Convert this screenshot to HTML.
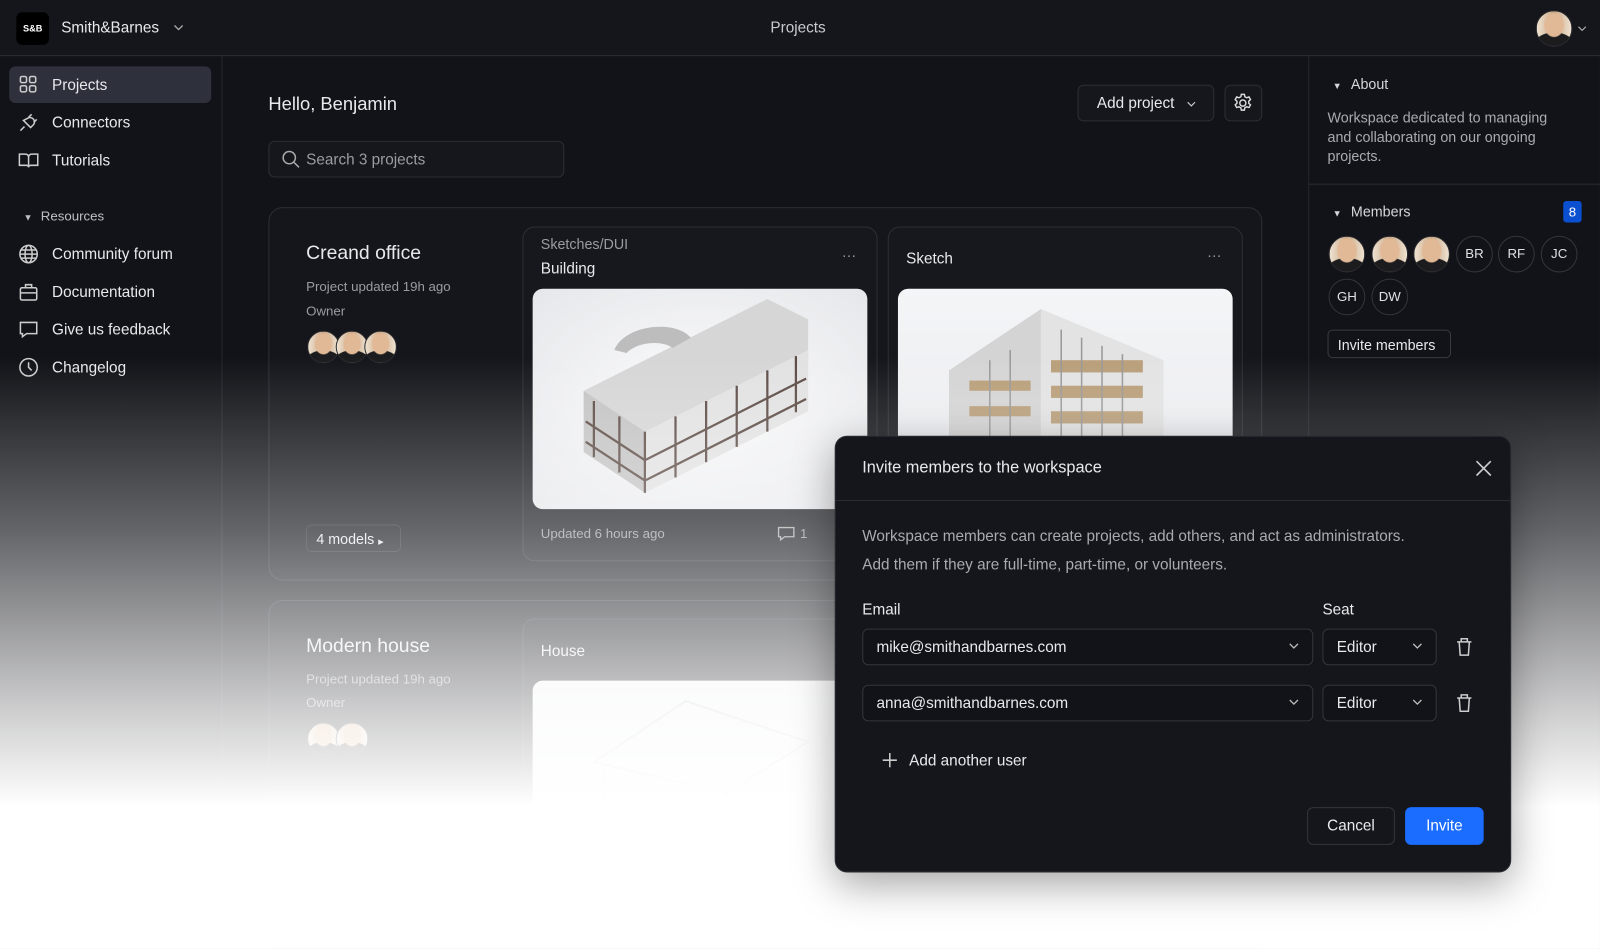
<!DOCTYPE html>
<html><head><meta charset="utf-8"><style>
*{box-sizing:border-box;margin:0;padding:0}
body{width:1600px;height:941px;overflow:hidden;background:#fff;font-family:"Liberation Sans",sans-serif;}
#s{position:absolute;left:0;top:0;width:1568px;height:930px;transform:scale(1.0204);transform-origin:0 0;overflow:hidden;background:#121318}
.a{position:absolute}
.t{color:#e8e9ec}
.m{color:#9a9ca3}
.bd{border:1px solid #2c2e36}
svg{display:block}
.av{position:absolute;width:32px;height:32px;border-radius:50%;background:radial-gradient(ellipse 30% 36% at 50% 40%,#e2b996 0 90%,transparent 100%),radial-gradient(ellipse 60% 40% at 50% 100%,#1c1c1e 0 95%,transparent 100%),linear-gradient(90deg,#efe3d2,#c9a886 50%,#efe3d2);border:1px solid #2a2a2e}
.ini{position:absolute;width:36px;height:36px;border-radius:50%;border:1px solid #33353d;color:#e0e1e5;font-size:13px;text-align:center;line-height:34px}
.nav{position:absolute;left:18px;font-size:15px;color:#e8e9ec}
.chev{position:absolute;right:13px;top:13px}
</style></head><body><div id="s">
<div class="a" style="left:0;top:0;width:1568px;height:55px;background:#15161b;border-bottom:1px solid #2a2c33"></div>
<div class="a" style="left:16px;top:12px;width:32px;height:32px;background:#000;border-radius:6px;color:#fff;font-size:9px;font-weight:bold;text-align:center;line-height:32px">S&amp;B</div>
<div class="a t" style="left:60px;top:19px;font-size:15px">Smith&amp;Barnes</div>
<svg class="a" style="left:170px;top:24px" width="10" height="6" viewBox="0 0 10 6" fill="none" stroke="#aaa" stroke-width="1.3"><path d="M1 1l4 4 4-4"/></svg>
<div class="a" style="left:755px;top:19px;font-size:15px;color:#c9cacf">Projects</div>
<div class="av" style="left:1505px;top:10px;width:36px;height:36px"></div>
<svg class="a" style="left:1546px;top:25px" width="9" height="6" viewBox="0 0 10 6" fill="none" stroke="#aaa" stroke-width="1.3"><path d="M1 1l4 4 4-4"/></svg>
<div class="a" style="left:217px;top:55px;width:1px;height:875px;background:#24262d"></div>
<div class="a" style="left:9px;top:65px;width:198px;height:36px;background:#2e303b;border-radius:6px"></div>
<svg class="a" style="left:18px;top:74px" width="20" height="18" viewBox="0 0 20 18" fill="none" stroke="#ccc" stroke-width="1.5"><rect x="2" y="1" width="6" height="6" rx="1.5"/><rect x="11" y="1" width="6" height="6" rx="1.5"/><rect x="2" y="10" width="6" height="6" rx="1.5"/><rect x="11" y="10" width="6" height="6" rx="1.5"/></svg>
<div class="nav" style="left:51px;top:75px">Projects</div>
<svg class="a" style="left:18px;top:110px" width="20" height="20" viewBox="0 0 20 20" fill="none" stroke="#ccc" stroke-width="1.5"><path d="M2 18l4-4M5 8l7 7 2-2a4 4 0 0 0-5-7zM10 5l3-3M15 10l3-3"/></svg>
<div class="nav" style="left:51px;top:112px">Connectors</div>
<svg class="a" style="left:18px;top:148px" width="20" height="18" viewBox="0 0 20 18" fill="none" stroke="#ccc" stroke-width="1.5"><path d="M1 3h6a3 3 0 0 1 3 3v10a2 2 0 0 0-2-2H1zM19 3h-6a3 3 0 0 0-3 3v10a2 2 0 0 1 2-2h7z"/></svg>
<div class="nav" style="left:51px;top:149px">Tutorials</div>
<div class="a" style="left:23px;top:204px;font-size:13px;color:#bfc0c5"><span style="font-size:9px;margin-right:8px">&#9660;</span>Resources</div>
<svg class="a" style="left:18px;top:239px" width="20" height="20" viewBox="0 0 20 20" fill="none" stroke="#ccc" stroke-width="1.5"><circle cx="10" cy="10" r="8.5"/><ellipse cx="10" cy="10" rx="3.5" ry="8.5"/><path d="M2 10h16M3 6h14M3 14h14"/></svg>
<div class="nav" style="left:51px;top:241px">Community forum</div>
<svg class="a" style="left:18px;top:276px" width="20" height="20" viewBox="0 0 20 20" fill="none" stroke="#ccc" stroke-width="1.5"><rect x="2" y="6" width="16" height="12" rx="1.5"/><path d="M7 6V3h6v3M2 11h16"/></svg>
<div class="nav" style="left:51px;top:278px">Documentation</div>
<svg class="a" style="left:18px;top:313px" width="20" height="20" viewBox="0 0 20 20" fill="none" stroke="#ccc" stroke-width="1.5"><path d="M2 3h16v11H8l-4 3v-3H2z"/></svg>
<div class="nav" style="left:51px;top:315px">Give us feedback</div>
<svg class="a" style="left:18px;top:350px" width="20" height="20" viewBox="0 0 20 20" fill="none" stroke="#ccc" stroke-width="1.5"><circle cx="10" cy="10" r="8.5"/><path d="M10 5v5l3 3"/></svg>
<div class="nav" style="left:51px;top:352px">Changelog</div>
<div class="a t" style="left:263px;top:92px;font-size:18px">Hello, Benjamin</div>
<div class="a bd" style="left:263px;top:138px;width:290px;height:36px;border-radius:6px;background:#16171c"></div>
<svg class="a" style="left:276px;top:147px" width="18" height="18" viewBox="0 0 18 18" fill="none" stroke="#aaa" stroke-width="1.5"><circle cx="7.5" cy="7.5" r="6"/><path d="M12 12l5 5"/></svg>
<div class="a m" style="left:300px;top:148px;font-size:15px">Search 3 projects</div>
<div class="a bd t" style="left:1056px;top:83px;width:134px;height:36px;border-radius:6px;background:#16171c;font-size:15px;padding:9px 0 0 18px">Add project</div>
<svg class="a" style="left:1163px;top:99px" width="9" height="6" viewBox="0 0 10 6" fill="none" stroke="#ccc" stroke-width="1.3"><path d="M1 1l4 4 4-4"/></svg>
<div class="a bd" style="left:1200px;top:83px;width:37px;height:36px;border-radius:6px;background:#16171c"></div>
<svg class="a" style="left:1208px;top:91px" width="20" height="20" viewBox="0 0 20 20" fill="none" stroke="#ddd" stroke-width="1.4"><circle cx="10" cy="10" r="3"/><path d="M8.5 1.5h3l.5 2.3 1.8 1 2.2-.8 1.5 2.6-1.7 1.6v2l1.7 1.6-1.5 2.6-2.2-.8-1.8 1-.5 2.3h-3l-.5-2.3-1.8-1-2.2.8-1.5-2.6 1.7-1.6v-2L2.5 6.6 4 4l2.2.8 1.8-1z"/></svg>
<div class="a bd" style="left:263px;top:203px;width:974px;height:366px;border-radius:14px;background:#15161b"></div>
<div class="a t" style="left:300px;top:238px;font-size:19px">Creand office</div>
<div class="a m" style="left:300px;top:273px;font-size:13px">Project updated 19h ago</div>
<div class="a m" style="left:300px;top:297px;font-size:13px">Owner</div>
<div class="av" style="left:301px;top:324px"></div><div class="av" style="left:329px;top:324px"></div><div class="av" style="left:357px;top:324px"></div>
<div class="a bd t" style="left:300px;top:514px;width:93px;height:27px;border-radius:5px;font-size:14px;padding:5px 0 0 9px">4 models <span style="font-size:7px">&#9654;</span></div>
<div class="a bd" style="left:512px;top:222px;width:348px;height:328px;border-radius:12px;background:#17181d"></div>
<div class="a m" style="left:530px;top:231px;font-size:14px">Sketches/DUI</div>
<div class="a t" style="left:530px;top:255px;font-size:15px">Building</div>
<div class="a m" style="left:825px;top:242px;font-size:14px">···</div>
<div class="a" style="left:522px;top:283px;width:328px;height:216px;border-radius:10px;background:radial-gradient(ellipse at 50% 50%,#fbfbfc,#e6e7ea)">
<svg width="328" height="216" viewBox="0 0 328 216"><path d="M50 100l180-90 40 20 0 40-180 90z" fill="#d6d6d6"/><path d="M50 100l60 40 0 60-60-40z" fill="#c4c4c4"/><path d="M110 140l160-80v60l-160 80z" fill="#e2e2e2"/><g stroke="#5d4c46" stroke-width="2.2" fill="none"><path d="M60 110v55M85 125v55M110 140v60M140 125v60M170 110v60M200 95v60M230 80v60M258 66v55"/><path d="M52 130l58 38 158-80M52 150l58 38 158-80"/></g><path d="M80 60c10-25 60-30 75-12l-18 10c-10-8-35-6-45 5z" fill="#bdbdbd"/></svg></div>
<div class="a m" style="left:530px;top:515px;font-size:13px">Updated 6 hours ago</div>
<svg class="a" style="left:762px;top:516px" width="17" height="15" viewBox="0 0 17 15" fill="none" stroke="#aaa" stroke-width="1.3"><path d="M1 1h15v9H7l-4 3v-3H1z"/></svg>
<div class="a m" style="left:784px;top:515px;font-size:13px">1</div>
<div class="a bd" style="left:870px;top:222px;width:348px;height:328px;border-radius:12px;background:#17181d"></div>
<div class="a t" style="left:888px;top:245px;font-size:15px">Sketch</div>
<div class="a m" style="left:1183px;top:242px;font-size:14px">···</div>
<div class="a" style="left:880px;top:283px;width:328px;height:216px;border-radius:10px;background:linear-gradient(#f4f5f7,#e8e9ec)">
<svg width="328" height="216" viewBox="0 0 328 216"><path d="M50 80l90-60 120 50v146H50z" fill="#d4d4d4"/><path d="M140 20l120 50v146H140z" fill="#e3e3e3"/><g fill="#b99f7a"><rect x="150" y="70" width="90" height="12"/><rect x="150" y="95" width="90" height="12"/><rect x="150" y="120" width="90" height="12"/><rect x="70" y="90" width="60" height="10"/><rect x="70" y="115" width="60" height="10"/></g><g stroke="#999" stroke-width="1.5"><path d="M160 40v170M180 48v160M200 56v150M220 64v140M90 70v140M110 60v150"/></g></svg></div>
<div class="a bd" style="left:263px;top:588px;width:974px;height:360px;border-radius:14px;background:#15161b"></div>
<div class="a t" style="left:300px;top:623px;font-size:19px">Modern house</div>
<div class="a m" style="left:300px;top:658px;font-size:13px">Project updated 19h ago</div>
<div class="a m" style="left:300px;top:681px;font-size:13px">Owner</div>
<div class="av" style="left:301px;top:708px"></div><div class="av" style="left:329px;top:708px"></div>
<div class="a bd" style="left:512px;top:606px;width:348px;height:320px;border-radius:12px;background:#17181d"></div>
<div class="a t" style="left:530px;top:630px;font-size:15px">House</div>
<div class="a" style="left:522px;top:667px;width:328px;height:216px;border-radius:10px;background:#f0f1f3"><svg width="328" height="216" viewBox="0 0 328 216" fill="none" stroke="#ccc" stroke-width="1.5"><path d="M60 80l90-60 120 40-80 50zM70 90v90M190 110v90M110 130l60 20"/></svg></div>
<div class="a" style="left:1282px;top:55px;width:1px;height:875px;background:#24262d"></div>
<div class="a t" style="left:1306px;top:74px;font-size:14px;color:#d6d7db"><span style="font-size:9px;margin-right:9px">&#9660;</span>About</div>
<div class="a m" style="left:1301px;top:106px;width:240px;font-size:14px;line-height:19px;color:#a9abb1">Workspace dedicated to managing and collaborating on our ongoing projects.</div>
<div class="a" style="left:1283px;top:180px;width:285px;height:1px;background:#2a2c33"></div>
<div class="a t" style="left:1306px;top:199px;font-size:14px;color:#d6d7db"><span style="font-size:9px;margin-right:9px">&#9660;</span>Members</div>
<div class="a" style="left:1532px;top:197px;width:18px;height:21px;background:#0b50d0;border-radius:3px;color:#fff;font-size:13px;text-align:center;line-height:21px">8</div>
<div class="av" style="left:1302px;top:231px;width:36px;height:36px"></div>
<div class="av" style="left:1344px;top:231px;width:36px;height:36px"></div>
<div class="av" style="left:1385px;top:231px;width:36px;height:36px"></div>
<div class="ini" style="left:1427px;top:231px">BR</div>
<div class="ini" style="left:1468px;top:231px">RF</div>
<div class="ini" style="left:1510px;top:231px">JC</div>
<div class="ini" style="left:1302px;top:273px">GH</div>
<div class="ini" style="left:1344px;top:273px">DW</div>
<div class="a t" style="left:1301px;top:323px;width:121px;height:28px;border:1px solid #393b43;border-radius:5px;font-size:14px;padding:6px 0 0 9px">Invite members</div>
<div class="a" style="left:0;top:0;width:1568px;height:930px;background:linear-gradient(to bottom,rgba(255,255,255,0) 350px,rgba(255,255,255,.35) 520px,rgba(255,255,255,.8) 700px,#fff 790px)"></div>
<div class="a" style="left:818px;top:427px;width:663px;height:428px;border-radius:12px;background:#15161c;border:1px solid #2a2c33;box-shadow:0 12px 40px rgba(0,0,0,.35)"></div>
<div class="a t" style="left:845px;top:450px;font-size:16px">Invite members to the workspace</div>
<svg class="a" style="left:1445px;top:450px" width="18" height="18" viewBox="0 0 18 18" stroke="#ccc" stroke-width="1.6"><path d="M2 2l14 14M16 2L2 16"/></svg>
<div class="a" style="left:819px;top:490px;width:661px;height:1px;background:#2a2c33"></div>
<div class="a" style="left:845px;top:512px;font-size:15px;line-height:28px;color:#a9abb1">Workspace members can create projects, add others, and act as administrators.<br>Add them if they are full-time, part-time, or volunteers.</div>
<div class="a t" style="left:845px;top:589px;font-size:15px">Email</div>
<div class="a t" style="left:1296px;top:589px;font-size:15px">Seat</div>
<div class="a t" style="left:845px;top:616px;width:442px;height:36px;border:1px solid #33353d;border-radius:6px;font-size:15px;padding:9px 0 0 13px;background:#121318">mike@smithandbarnes.com<svg class="chev" width="10" height="6" viewBox="0 0 10 6" fill="none" stroke="#bbb" stroke-width="1.3"><path d="M1 1l4 4 4-4"/></svg></div>
<div class="a t" style="left:1296px;top:616px;width:112px;height:36px;border:1px solid #33353d;border-radius:6px;font-size:15px;padding:9px 0 0 13px;background:#121318">Editor<svg class="chev" width="10" height="6" viewBox="0 0 10 6" fill="none" stroke="#bbb" stroke-width="1.3"><path d="M1 1l4 4 4-4"/></svg></div>
<div class="a t" style="left:845px;top:671px;width:442px;height:36px;border:1px solid #33353d;border-radius:6px;font-size:15px;padding:9px 0 0 13px;background:#121318">anna@smithandbarnes.com<svg class="chev" width="10" height="6" viewBox="0 0 10 6" fill="none" stroke="#bbb" stroke-width="1.3"><path d="M1 1l4 4 4-4"/></svg></div>
<div class="a t" style="left:1296px;top:671px;width:112px;height:36px;border:1px solid #33353d;border-radius:6px;font-size:15px;padding:9px 0 0 13px;background:#121318">Editor<svg class="chev" width="10" height="6" viewBox="0 0 10 6" fill="none" stroke="#bbb" stroke-width="1.3"><path d="M1 1l4 4 4-4"/></svg></div>
<svg class="a" style="left:1426px;top:624px" width="18" height="20" viewBox="0 0 18 20" fill="none" stroke="#ccc" stroke-width="1.5"><path d="M2 5h14M6 5V2h6v3M4 5l1 13h8l1-13"/></svg>
<svg class="a" style="left:1426px;top:679px" width="18" height="20" viewBox="0 0 18 20" fill="none" stroke="#ccc" stroke-width="1.5"><path d="M2 5h14M6 5V2h6v3M4 5l1 13h8l1-13"/></svg>
<svg class="a" style="left:865px;top:738px" width="14" height="14" viewBox="0 0 14 14" stroke="#ccc" stroke-width="1.5"><path d="M7 0v14M0 7h14"/></svg>
<div class="a t" style="left:891px;top:737px;font-size:15px">Add another user</div>
<div class="a t" style="left:1281px;top:791px;width:86px;height:37px;border:1px solid #33353d;border-radius:6px;font-size:15px;text-align:center;line-height:35px">Cancel</div>
<div class="a" style="left:1377px;top:791px;width:77px;height:37px;background:#1a6dff;border-radius:6px;color:#fff;font-size:15px;text-align:center;line-height:37px">Invite</div>
</div></body></html>
